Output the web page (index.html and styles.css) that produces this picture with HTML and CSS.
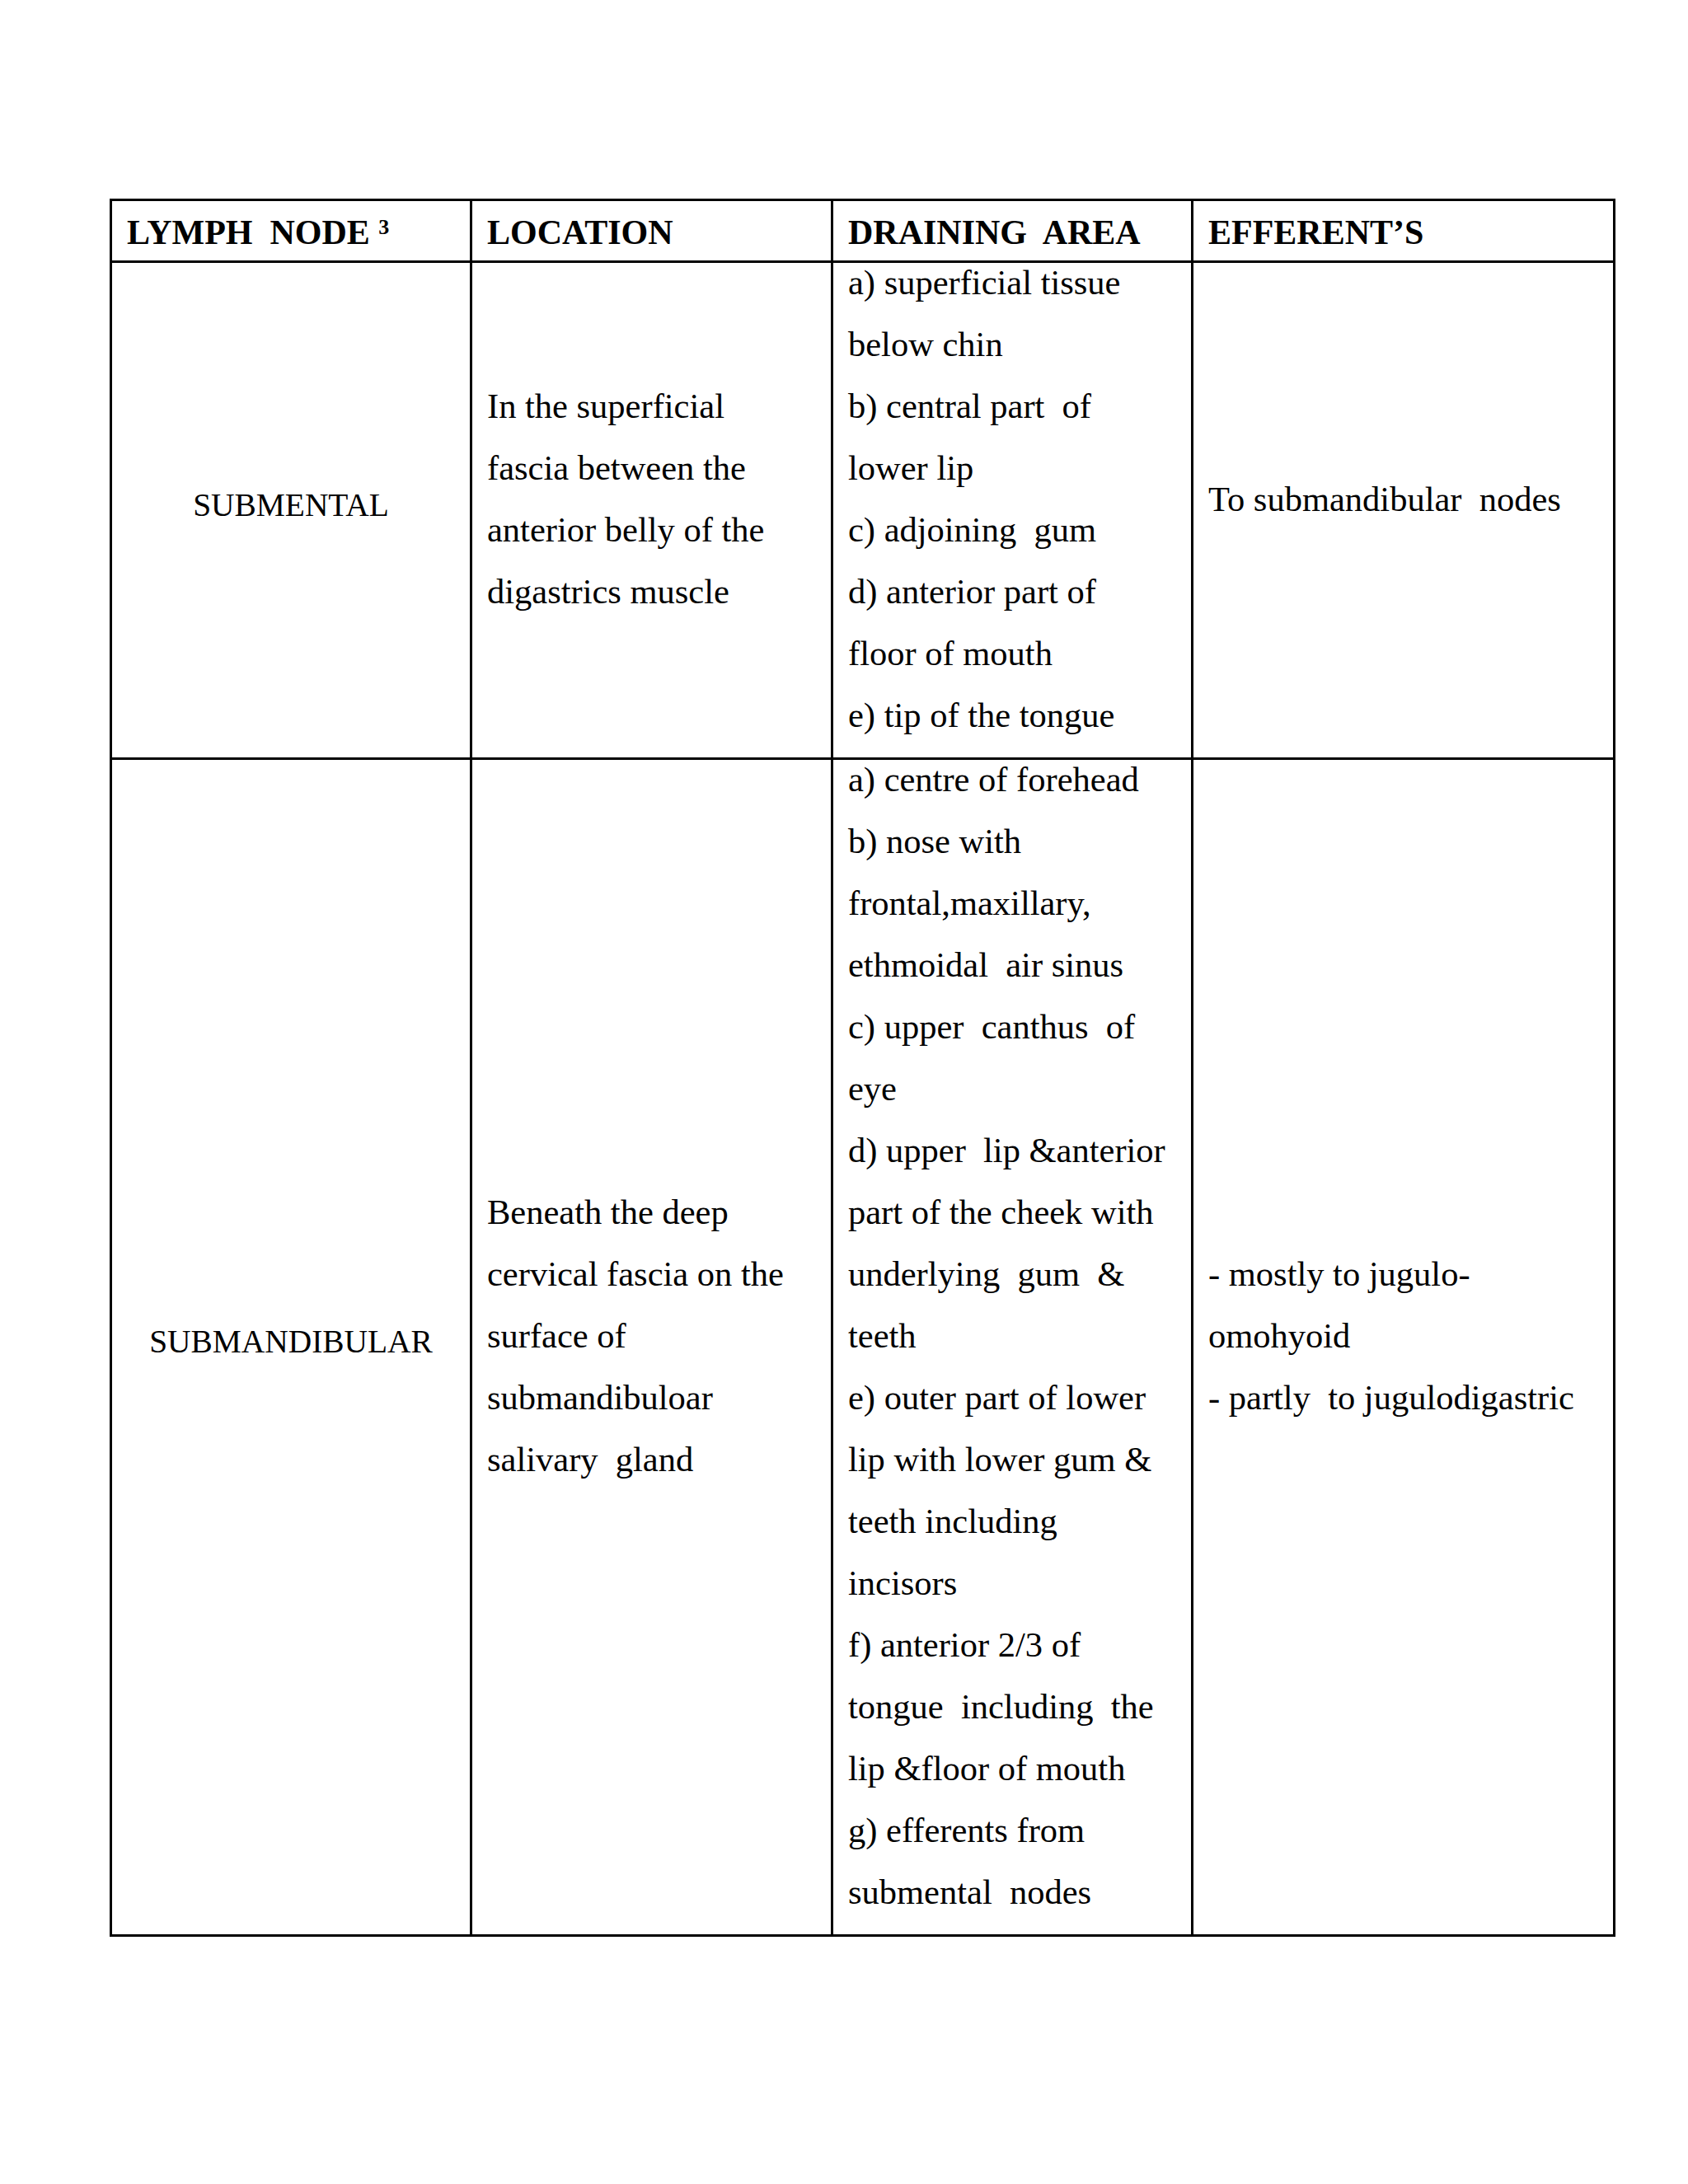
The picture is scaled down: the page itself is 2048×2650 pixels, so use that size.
FILE: index.html
```html
<!DOCTYPE html>
<html lang="en">
<head>
<meta charset="utf-8">
<title>Lymph nodes</title>
<link rel="stylesheet" href="styles.css">
</head>
<body>
<div class="page">
  <table class="nodes">
    <colgroup>
      <col class="c1"><col class="c2"><col class="c3"><col class="c4">
    </colgroup>
    <thead>
      <tr>
        <th>LYMPH&nbsp; NODE <sup class="ref">3</sup></th>
        <th>LOCATION</th>
        <th>DRAINING&nbsp; AREA</th>
        <th>EFFERENT’S</th>
      </tr>
    </thead>
    <tbody>
      <tr>
        <td class="name"><div class="nm">SUBMENTAL</div></td>
        <td><div class="txt">In the superficial<br>fascia between the<br>anterior belly of the<br>digastrics muscle</div></td>
        <td><div class="txt">a) superficial tissue<br>below chin<br>b) central part&nbsp; of<br>lower lip<br>c) adjoining&nbsp; gum<br>d) anterior part of<br>floor of mouth<br>e) tip of the tongue</div></td>
        <td><div class="txt">To submandibular&nbsp; nodes</div></td>
      </tr>
      <tr>
        <td class="name"><div class="nm">SUBMANDIBULAR</div></td>
        <td><div class="txt">Beneath the deep<br>cervical fascia on the<br>surface of<br>submandibuloar<br>salivary&nbsp; gland</div></td>
        <td><div class="txt">a) centre of forehead<br>b) nose with<br>frontal,maxillary,<br>ethmoidal&nbsp; air sinus<br>c) upper&nbsp; canthus&nbsp; of<br>eye<br>d) upper&nbsp; lip &amp;anterior<br>part of the cheek with<br>underlying&nbsp; gum&nbsp; &amp;<br>teeth<br>e) outer part of lower<br>lip with lower gum &amp;<br>teeth including<br>incisors<br>f) anterior 2/3 of<br>tongue&nbsp; including&nbsp; the<br>lip &amp;floor of mouth<br>g) efferents from<br>submental&nbsp; nodes</div></td>
        <td><div class="txt">- mostly to jugulo-<br>omohyoid<br>- partly&nbsp; to jugulodigastric</div></td>
      </tr>
    </tbody>
  </table>
</div>
</body>
</html>
```

FILE: styles.css
```css
html, body {
  margin: 0;
  padding: 0;
  background: #ffffff;
}

body {
  font-family: "Liberation Serif", "Times New Roman", serif;
  color: #000000;
}

.page {
  width: 2048px;
  min-height: 2650px;
  padding: 241px 0 0 133px;
  box-sizing: border-box;
}

.nodes {
  border-collapse: collapse;
  table-layout: fixed;
  width: 1824px;
}

.c1 { width: 437px; }
.c2 { width: 438px; }
.c3 { width: 437px; }
.c4 { width: 512px; }

.nodes th,
.nodes td {
  border: 3px solid #000000;
  padding: 0 17px 0 18px;
  text-align: left;
}

.nodes th {
  font-weight: bold;
  font-size: 42px;
  line-height: 68px;
  padding-top: 4px;
  vertical-align: top;
  white-space: nowrap;
}

.ref {
  font-size: 26px;
  vertical-align: 12px;
  line-height: 0;
}

.nodes td {
  vertical-align: middle;
  font-size: 42.5px;
}

.txt {
  line-height: 75px;
  margin: -14px 0 14px;
  white-space: nowrap;
}

.nodes td.name {
  text-align: center;
  padding: 0 8px;
}

.nm {
  font-size: 39.4px;
  line-height: 45px;
  margin: -6px 0 6px;
}
```
